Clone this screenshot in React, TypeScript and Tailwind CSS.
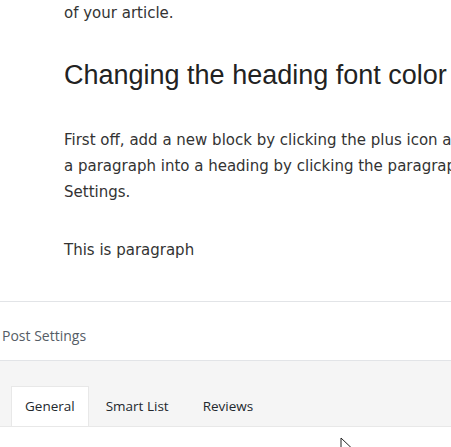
import React from 'react';

const Cursor = () => (
  <svg className="absolute left-[340px] top-[437px]" width="12" height="18" viewBox="0 0 12 18">
    <path d="M1 1 L1 15 L4.5 11.5 L7 17 L9 16 L6.5 10.5 L11 10.5 Z" fill="#fff" stroke="#222" strokeWidth="1" strokeLinejoin="round" />
  </svg>
);

export default function App() {
  const tabs = ['General', 'Smart List', 'Reviews'];

  return (
    <div className="relative w-[451px] h-[447px] overflow-hidden bg-white">
      {/* Editor content */}
      <div className="pl-16 whitespace-nowrap text-[#333]">
        <p className="font-['DejaVu_Sans',Verdana,sans-serif] text-[15px] leading-[26px]">of your article.</p>
        <h2 className="font-['Liberation_Sans',Arial,sans-serif] text-[27px] leading-[32px] text-[#222] mt-[33px]">
          Changing the heading font color
        </h2>
        <div className="font-['DejaVu_Sans',Verdana,sans-serif] text-[15px] leading-[26px] mt-[36px]">
          <p>First off, add a new block by clicking the plus icon and</p>
          <p>a paragraph into a heading by clicking the paragraph icon</p>
          <p>Settings.</p>
          <p className="mt-[32px]">This is paragraph</p>
        </div>
      </div>

      {/* Post settings panel */}
      <div className="mt-[38px] border-t border-[#e2e4e7] font-['Open_Sans','Noto_Sans',sans-serif]">
        <div className="h-[59px] pt-[24px] pl-[2px] text-[14px] leading-[20px] text-[#555d66] border-b border-[#e2e4e7]">
          Post Settings
        </div>
        <div className="bg-[#f5f5f5] pt-[25px] pl-[11px] flex border-b border-[#e8e8e8]">
          {tabs.map((t, i) => (
            <div
              key={t}
              className={`h-[40px] flex items-center text-[13.5px] text-[#23282d] ${
                i === 0 ? 'bg-white px-[13px] border border-b-0 border-[#e8e8e8] -mb-px' : 'px-[17px]'
              }`}
            >
              {t}
            </div>
          ))}
        </div>
      </div>

      <Cursor />
    </div>
  );
}
